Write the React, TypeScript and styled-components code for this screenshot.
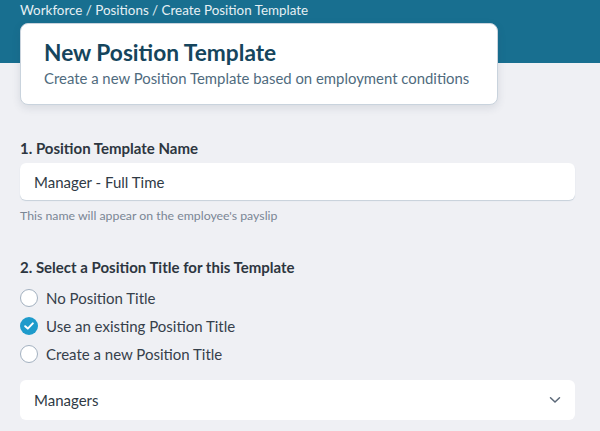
import { createGlobalStyle, styled } from 'styled-components'

const GlobalStyle = createGlobalStyle`
  html, body {
    margin: 0;
    padding: 0;
    background: #eff0f4;
    font-family: Lato, 'Open Sans', sans-serif;
  }
`

const options = ['No Position Title', 'Use an existing Position Title', 'Create a new Position Title']

export default function App() {
  const selected = 1

  return (
    <>
      <GlobalStyle />
      <Page>
        <Header>
          <Breadcrumb>Workforce / Positions / Create Position Template</Breadcrumb>
          <TitleCard>
            <Title>New Position Template</Title>
            <Subtitle>Create a new Position Template based on employment conditions</Subtitle>
          </TitleCard>
        </Header>

        <Form>
          <Section>
            <Label>1. Position Template Name</Label>
            <Field>
              <FieldText>Manager - Full Time</FieldText>
            </Field>
            <Hint>This name will appear on the employee's payslip</Hint>
          </Section>

          <Section>
            <Label>2. Select a Position Title for this Template</Label>
            <RadioList>
              {options.map((opt, i) => (
                <RadioRow key={opt}>
                  <Radio $checked={i === selected}>
                    {i === selected && (
                      <svg width="10" height="8" viewBox="0 0 10 8">
                        <path d="M1.2 4.2 L3.8 6.6 L8.8 1.4" fill="none" stroke="#fff" strokeWidth="2" strokeLinecap="round" strokeLinejoin="round" />
                      </svg>
                    )}
                  </Radio>
                  <RadioLabel>{opt}</RadioLabel>
                </RadioRow>
              ))}
            </RadioList>
            <SelectBox>
              <FieldText>Managers</FieldText>
              <svg width="12" height="8" viewBox="0 0 12 8">
                <path d="M1.5 1.8 L6 6 L10.5 1.8" fill="none" stroke="#5b6878" strokeWidth="1.5" strokeLinecap="round" />
              </svg>
            </SelectBox>
          </Section>
        </Form>
      </Page>
    </>
  )
}

const Page = styled.div`
  width: 600px;
  min-height: 431px;
  overflow: hidden;
`

const Header = styled.div`
  background: linear-gradient(to bottom, #186f90 0, #186f90 63px, transparent 63px);
  padding: 2px 20px 0;
`

const Breadcrumb = styled.div`
  color: #e6eff4;
  font-size: 13.4px;
  line-height: 17px;
`

const TitleCard = styled.div`
  margin-top: 4px;
  width: 478px;
  box-sizing: border-box;
  background: #fff;
  border: 1px solid #c9d3dd;
  border-radius: 8px;
  box-shadow: 0 3px 8px rgba(40, 60, 80, 0.12);
  padding: 14px 23px 16px;
`

const Title = styled.h1`
  margin: 0;
  color: #15455d;
  font-size: 22.7px;
  font-weight: 700;
  line-height: 29px;
`

const Subtitle = styled.div`
  color: #4f6b7e;
  font-size: 14.9px;
  line-height: 20px;
  margin-top: 1px;
`

const Form = styled.div`
  padding: 34px 25px 0 20px;
  display: flex;
  flex-direction: column;
  gap: 34px;
`

const Section = styled.div`
  display: flex;
  flex-direction: column;
`

const Label = styled.div`
  color: #2d3640;
  font-size: 15px;
  font-weight: 700;
  line-height: 18px;
  margin-bottom: 6px;
`

const Field = styled.div`
  height: 37px;
  background: #fff;
  border-radius: 6px;
  box-shadow: 0 1px 1px #c6d0da;
  display: flex;
  align-items: center;
  padding: 0 14px;
`

const FieldText = styled.span`
  color: #2f3a45;
  font-size: 15px;
`

const Hint = styled.div`
  color: #7a8694;
  font-size: 12.3px;
  line-height: 16px;
  margin-top: 8px;
`

const RadioList = styled.div`
  display: flex;
  flex-direction: column;
  gap: 8px;
  margin-top: 6px;
`

const RadioRow = styled.div`
  display: flex;
  align-items: center;
  gap: 8px;
  height: 20px;
`

const Radio = styled.span<{ $checked: boolean }>`
  width: 18px;
  height: 18px;
  box-sizing: border-box;
  border-radius: 50%;
  border: ${(p) => (p.$checked ? 'none' : '1.5px solid #a3b1c0')};
  background: ${(p) => (p.$checked ? '#1e9bcb' : '#fff')};
  display: grid;
  place-items: center;
  flex-shrink: 0;
`

const RadioLabel = styled.span`
  color: #36404b;
  font-size: 15px;
`

const SelectBox = styled.div`
  margin-top: 16px;
  height: 40px;
  background: #fff;
  border-radius: 6px;
  display: flex;
  align-items: center;
  justify-content: space-between;
  padding: 0 14px 0 14px;
`
